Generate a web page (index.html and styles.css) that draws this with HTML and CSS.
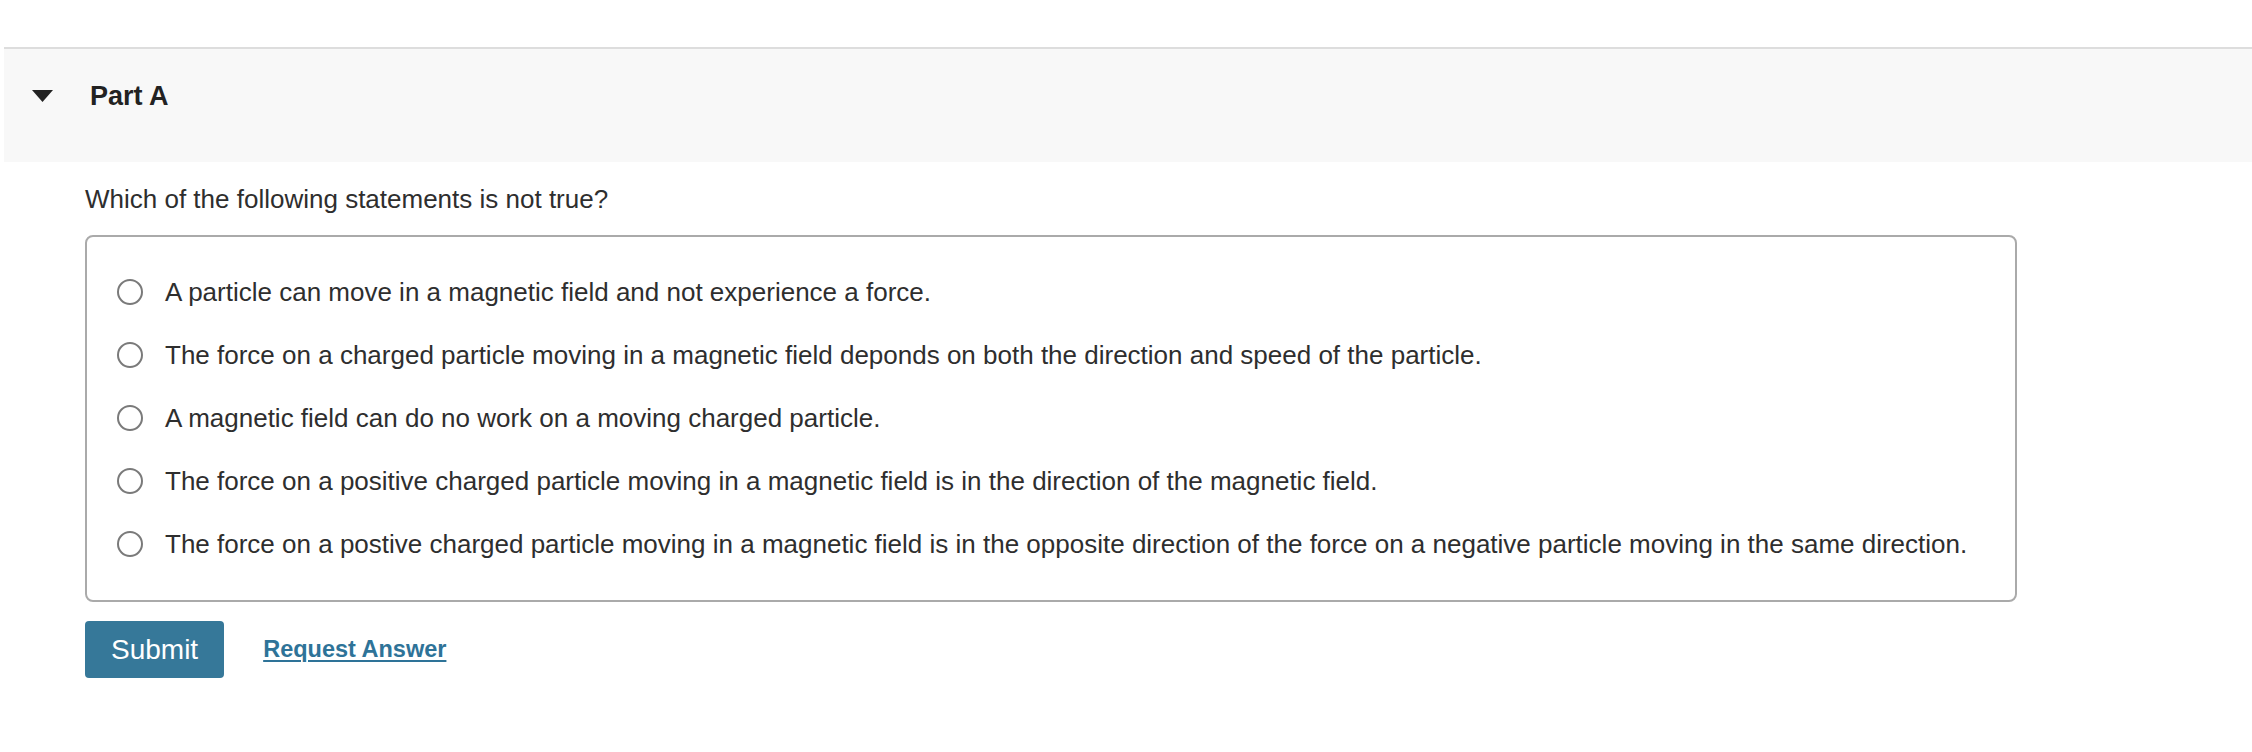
FILE: index.html
```html
<!DOCTYPE html>
<html lang="en">
<head>
    <meta charset="UTF-8">
    <title>Part A</title>
    <link rel="stylesheet" href="styles.css">
</head>
<body>

<div class="part">
    <div class="part-header">
        <svg class="caret" width="21" height="12" viewBox="0 0 21 12"><polygon points="0,0 21,0 10.5,12" fill="#222"/></svg>
        <h2>Part A</h2>
    </div>

    <div class="part-body">
        <p class="question">Which of the following statements is not true?</p>

        <div class="choices">
            <label class="choice"><input type="radio" name="partA"><span>A particle can move in a magnetic field and not experience a force.</span></label>
            <label class="choice"><input type="radio" name="partA"><span>The force on a charged particle moving in a magnetic field deponds on both the direction and speed of the particle.</span></label>
            <label class="choice"><input type="radio" name="partA"><span>A magnetic field can do no work on a moving charged particle.</span></label>
            <label class="choice"><input type="radio" name="partA"><span>The force on a positive charged particle moving in a magnetic field is in the direction of the magnetic field.</span></label>
            <label class="choice"><input type="radio" name="partA"><span>The force on a postive charged particle moving in a magnetic field is in the opposite direction of the force on a negative particle moving in the same direction.</span></label>
        </div>

        <div class="actions">
            <button class="submit">Submit</button>
            <a href="#" class="request">Request Answer</a>
        </div>
    </div>
</div>

</body>
</html>
```

FILE: styles.css
```css
body {
    margin: 0;
    padding: 47px 0 0 4px;
    font-family: "Liberation Sans", Arial, sans-serif;
    color: #2e2e2e;
    background: white;
}
.part {
    border-top: 2px solid #dddddd;
}
.part-header {
    display: flex;
    align-items: center;
    gap: 37px;
    background: #f8f8f8;
    padding: 31px 0 50px 28px;
}
.caret {
    display: block;
}
.part-header h2 {
    margin: 0;
    font-size: 27px;
    line-height: 32px;
    font-weight: bold;
    color: #222;
}
.part-body {
    padding-left: 81px;
}
.question {
    margin: 19px 0 18px;
    font-size: 26px;
    line-height: 36px;
}
.choices {
    width: 1932px;
    box-sizing: border-box;
    border: 2px solid #aaaaaa;
    border-radius: 8px;
    padding: 23px 0 25px 30px;
}
.choice {
    display: flex;
    align-items: center;
    gap: 22px;
    height: 63px;
    font-size: 26px;
    line-height: 36px;
}
.choice input {
    appearance: none;
    -webkit-appearance: none;
    margin: 0;
    width: 26px;
    height: 26px;
    border: 2px solid #7a7a7a;
    border-radius: 50%;
    background: white;
    flex: none;
}
.actions {
    display: flex;
    align-items: center;
    gap: 39px;
    margin-top: 19px;
}
.submit {
    height: 57px;
    padding: 0 26px;
    border: none;
    border-radius: 4px;
    background: #367899;
    color: white;
    font-family: inherit;
    font-size: 28px;
}
.request {
    color: #2e7398;
    font-size: 23.5px;
    font-weight: bold;
    text-decoration: underline;
    text-decoration-thickness: 2px;
    text-underline-offset: 3px;
}
```
